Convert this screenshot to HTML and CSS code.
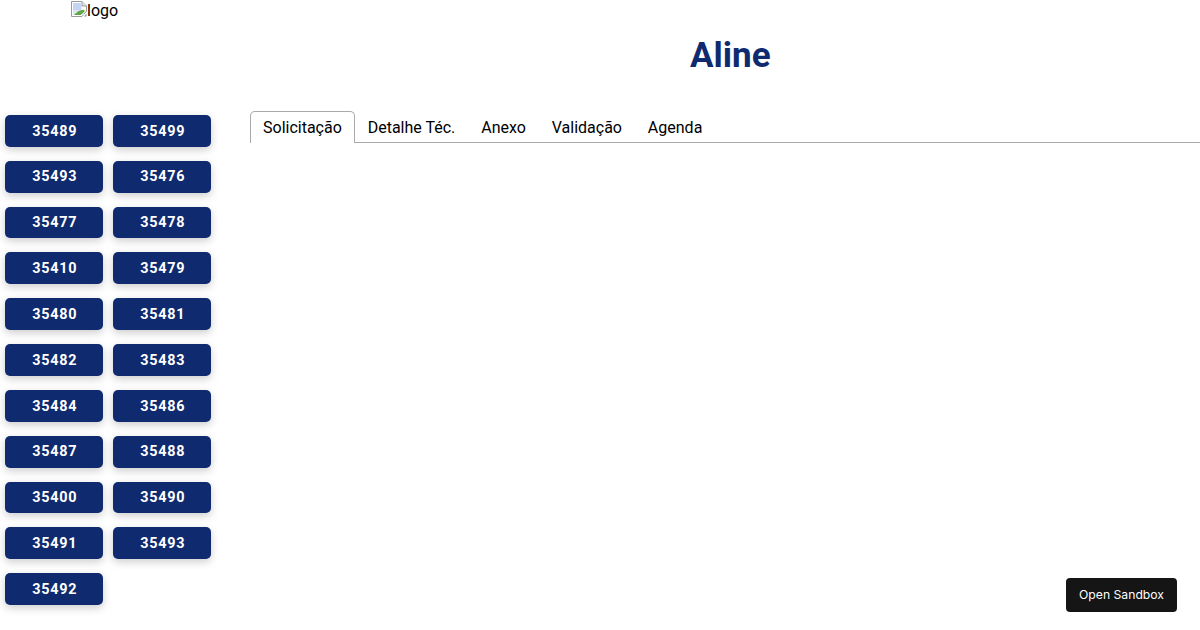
FILE: index.html
```html
<!DOCTYPE html>
<html lang="pt">
<head>
<meta charset="utf-8">
<title>Aline</title>
<link rel="stylesheet" href="styles.css">
</head>
<body>
<header class="top">
  <div class="logo-cell">
    <span class="logo">
      <svg class="broken" width="16" height="16" viewBox="0 0 16 16" aria-hidden="true">
        <path d="M.5.5H11L15.5 5V10L11 15.5H.5Z" fill="#fff" stroke="#9a9a9a"/>
        <path d="M11 .5V5H15.5" fill="#e4e4e4" stroke="#9a9a9a"/>
        <rect x="2" y="2" width="8.5" height="7.5" fill="#c4d4f2"/>
        <rect x="2" y="9" width="11" height="5" fill="#dbe5f5"/>
        <path d="M3 14L7 10.5C9 9.5 11 9 12.5 8.8L14 10L9.5 14Z" fill="#5fa83b"/>
        <path d="M13 15.5H15.5V12.5Z" fill="#9a9a9a"/>
      </svg>logo
    </span>
  </div>
  <h1 class="title">Aline</h1>
</header>
<main class="content">
  <nav class="ids">
    <button class="id">35489</button><button class="id">35499</button>
    <button class="id">35493</button><button class="id">35476</button>
    <button class="id">35477</button><button class="id">35478</button>
    <button class="id">35410</button><button class="id">35479</button>
    <button class="id">35480</button><button class="id">35481</button>
    <button class="id">35482</button><button class="id">35483</button>
    <button class="id">35484</button><button class="id">35486</button>
    <button class="id">35487</button><button class="id">35488</button>
    <button class="id">35400</button><button class="id">35490</button>
    <button class="id">35491</button><button class="id">35493</button>
    <button class="id">35492</button>
  </nav>
  <section class="panel">
    <ul class="tabs">
      <li class="tab tab-active">Solicitação</li>
      <li class="tab">Detalhe Téc.</li>
      <li class="tab">Anexo</li>
      <li class="tab">Validação</li>
      <li class="tab">Agenda</li>
    </ul>
  </section>
</main>
<a class="sandbox">Open Sandbox</a>
</body>
</html>
```
FILE: styles.css
```css
* { box-sizing: border-box; }
html, body { height: 100%; }
body {
  margin: 0;
  background: #fff;
  color: #000;
  font-family: Roboto, sans-serif;
  overflow: hidden;
}
.top {
  display: flex;
  height: 114.9px;
}
.logo-cell {
  width: 261px;
  flex: none;
  padding: 1px 0 0 71px;
}
.logo {
  display: inline-flex;
  align-items: flex-start;
  font: 16px/19px Roboto, sans-serif;
}
.broken { flex: none; }
.title {
  flex: 1;
  margin: 35px 0 0;
  padding: 0;
  text-align: left;
  text-indent: 429px;
  font-size: 35px;
  line-height: 41px;
  font-weight: 700;
  color: #0f2a6e;
  white-space: nowrap;
}
.content {
  display: flex;
  align-items: flex-start;
}
.ids {
  width: 216px;
  flex: none;
  display: grid;
  grid-template-columns: 108px 108px;
  grid-auto-rows: 31.83px;
  row-gap: 14px;
}
.id {
  margin: 0 5px;
  padding: 0.7px 0 0 1.5px;
  border: 0;
  border-radius: 5px;
  background: #0f2a6e;
  color: #fff;
  font-family: Roboto, sans-serif;
  font-size: 14.4px;
  font-weight: 700;
  letter-spacing: 0.72px;
  box-shadow: 0 3px 8px rgba(0, 0, 0, 0.2);
}
.panel {
  flex: 1;
  padding: 0 0 0 34px;
  margin-top: -4px;
}
.tabs {
  display: flex;
  margin: 0;
  padding: 0;
  list-style: none;
  border-bottom: 1px solid #aaa;
  height: 32px;
}
.tab {
  height: 32px;
  padding: 6px 12px;
  border: 1px solid transparent;
  border-bottom: 0;
  font-size: 16px;
  line-height: 20px;
  color: #000;
  white-space: nowrap;
}
.tab + .tab { margin-left: -0.13px; }
.tab-active {
  background: #fff;
  border-color: #aaa;
  border-radius: 5px 5px 0 0;
}
.sandbox {
  position: fixed;
  left: 1066px;
  top: 578px;
  width: 111px;
  height: 34px;
  padding-bottom: 1px;
  display: flex;
  align-items: center;
  justify-content: center;
  background: #151515;
  border-radius: 4px;
  color: #fff;
  font-family: Inter, sans-serif;
  font-size: 12.2px;
}
```
